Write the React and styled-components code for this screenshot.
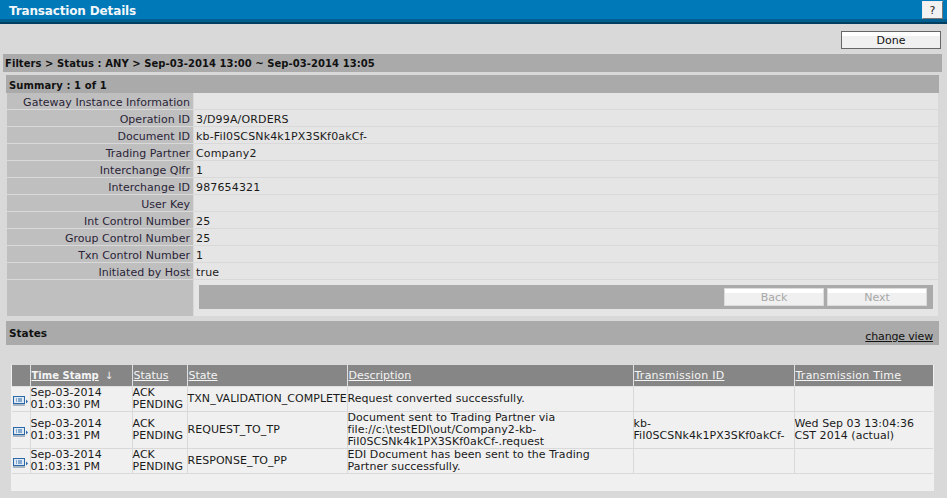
import React from "react";
import styled, { createGlobalStyle } from "styled-components";

const Global = createGlobalStyle`
  html, body { margin: 0; padding: 0; background: #d9d9d9; }
  body { font-family: "DejaVu Sans", Verdana, sans-serif; font-size: 11px; line-height: 12px; color: #1a1a1a; }
  * { box-sizing: border-box; }
`;

const Page = styled.div`width: 947px; height: 498px; overflow: hidden; background: #d9d9d9;`;
const TitleBar = styled.header`
  height: 24px; display: flex; align-items: flex-start; justify-content: space-between;
  background: linear-gradient(#0079b9 0, #0079b9 19px, #005f8f 19px, #005f8f 22px, #003f5f 22px);
  padding: 1px 4px 0 9px;
`;
const Title = styled.h1`margin: 2px 0 0; font-size: 12px; line-height: 16px; font-weight: 700; color: #f2f7fa; letter-spacing: -0.15px;`;
const HelpButton = styled.button`
  width: 21px; height: 18px; padding: 0; background: #f2f2f2; border: 1px solid #777;
  border-top-color: #eee; border-left-color: #eee; font: 11px "DejaVu Sans", sans-serif; color: #222;
`;
const DoneRow = styled.div`display: flex; justify-content: flex-end; padding: 7px 6px 0 0; height: 30px;`;
const Button = styled.button`
  width: 100px; height: 18px; padding: ${p => (p.disabled ? "2px" : "1px")} 0 0; font: 11px/14px "DejaVu Sans", sans-serif;
  background: linear-gradient(#fff 0, #fff 4px, #f0f0f0 4px);
  border: 1px solid ${p => (p.disabled ? "#dcdcdc" : "#666")};
  color: ${p => (p.disabled ? "#a8a8a8" : "#111")};
`;
const FilterBar = styled.div`
  margin-left: 3px; width: 939px; height: 18px; background: #aaa;
  padding: 4px 0 0 2px; font-size: 10px; font-weight: 700; color: #111; letter-spacing: 0.06px;
`;
const Panel = styled.section`margin: 3px 0 0 6px; width: 933px;`;
const SectionHead = styled.div`height: 18px; background: #aaa; padding: 5px 0 0 3px; font-size: 10px; font-weight: 700; color: #111; letter-spacing: 0.08px;`;
const Summary = styled.div`margin-left: 1px; width: 931px; background: #e5e5e5;`;
const Row = styled.div`
  display: grid; grid-template-columns: 187px 1fr; height: 17px;
  border-bottom: 1px solid #d9d9d9;
`;
const Label = styled.div`
  background: #bfbfbf; text-align: right; padding: 4px 3px 0 0; color: #2a2438;
  border-right: 1px solid #d9d9d9; white-space: nowrap; letter-spacing: 0.03px;
`;
const Value = styled.div`padding: 4px 0 0 2px; color: #1a1a1a; white-space: nowrap; letter-spacing: 0.15px;`;
const PagerRow = styled.div`display: grid; grid-template-columns: 187px 1fr; height: 36px;`;
const PagerLabel = styled.div`background: #bfbfbf; border-right: 1px solid #d9d9d9;`;
const PagerCell = styled.div`padding: 5px 5px 6px 5px;`;
const PagerBar = styled.div`
  height: 24px; background: #aaa; display: flex; justify-content: flex-end; gap: 3px;
  padding: 3px 6px 0 0;
`;
const StatesBar = styled.div`
  margin: 5px 0 0 6px; width: 933px; height: 24px; background: #aaa; display: flex;
  justify-content: space-between; padding: 6px 6px 0 3px; font-size: 10.5px; font-weight: 700; color: #111;
`;
const ChangeView = styled.a`font-size: 11px; font-weight: 400; text-decoration: underline; color: #111; margin-top: 4px; letter-spacing: -0.15px;`;
const TableWrap = styled.div`margin: 20px 0 0 11px; width: 923px; background: #f0f0f0; height: 126px;`;
const Table = styled.table`
  margin-left: 1px; width: 921px; table-layout: fixed; border-collapse: collapse; border-spacing: 0;
`;
const Th = styled.th`
  height: 21px; background: #868686; color: #f4f4f4; font-weight: ${p => (p.$sorted ? 700 : 400)};
  font-size: ${p => (p.$sorted ? "10px" : "11px")};
  letter-spacing: ${p => (p.$wide ? "0.25px" : "0")};
  text-align: left; padding: 1px 0 0 1px; border-right: 1px solid #e0e0e0; border-bottom: 1px solid #e0e0e0;
  text-decoration: underline; white-space: nowrap;
  &:last-child { border-right: 0; }
`;
const SortArrow = styled.span`display: inline-block; margin-left: 6px; text-decoration: none; font-weight: 400;`;
const Td = styled.td`
  background: #f0f0f0; vertical-align: middle; padding: 0 ${p => (p.$wrapGap ? "4px" : "0")} 0 0; color: #1a1a1a;
  border-right: 1px solid #d9d9d9; border-bottom: 1px solid #d9d9d9; overflow: visible; letter-spacing: 0.05px;
  &:last-child { border-right: 0; }
`;
const IconTd = styled(Td)`padding: 5px 0 0 1px;`;
const Nowrap = styled.span`white-space: nowrap;`;

const DetailIcon = () => (
  <svg width="16" height="10" viewBox="0 0 16 10" style={{ display: "block" }}>
    <rect x="0.5" y="0.5" width="11" height="7" fill="#dfeaf5" stroke="#2a68a8" />
    <rect x="0" y="8" width="12" height="2" fill="#a9b4c2" />
    <path d="M3 3h1M3 5h1M5 3h4M5 5h4" stroke="#2a68a8" />
    <path d="M13 3.5l2 2-2 2z" fill="#2a68a8" />
  </svg>
);

const summary = [
  ["Gateway Instance Information", ""],
  ["Operation ID", "3/D99A/ORDERS"],
  ["Document ID", "kb-FiI0SCSNk4k1PX3SKf0akCf-"],
  ["Trading Partner", "Company2"],
  ["Interchange Qlfr", "1"],
  ["Interchange ID", "987654321"],
  ["User Key", ""],
  ["Int Control Number", "25"],
  ["Group Control Number", "25"],
  ["Txn Control Number", "1"],
  ["Initiated by Host", "true"],
];

const states = [
  { h: 25, t: "01:03:30 PM", state: "TXN_VALIDATION_COMPLETE", desc: "Request converted successfully." },
  {
    h: 37, t: "01:03:31 PM", state: "REQUEST_TO_TP",
    desc: "Document sent to Trading Partner via file://c:\\testEDI\\out/Company2-kb-FiI0SCSNk4k1PX3SKf0akCf-.request",
    id: "kb-FiI0SCSNk4k1PX3SKf0akCf-", time: "Wed Sep 03 13:04:36 CST 2014 (actual)",
  },
  { h: 25, t: "01:03:31 PM", state: "RESPONSE_TO_PP", desc: "EDI Document has been sent to the Trading Partner successfully." },
];

export default function App() {
  return (
    <Page>
      <Global />
      <TitleBar>
        <Title>Transaction Details</Title>
        <HelpButton>?</HelpButton>
      </TitleBar>
      <DoneRow><Button>Done</Button></DoneRow>
      <FilterBar>Filters &gt; Status : ANY &gt; Sep-03-2014 13:00 ~ Sep-03-2014 13:05</FilterBar>
      <Panel>
        <SectionHead>Summary : 1 of 1</SectionHead>
        <Summary>
          {summary.map(([l, v]) => (
            <Row key={l}><Label>{l}</Label><Value>{v}</Value></Row>
          ))}
          <PagerRow>
            <PagerLabel />
            <PagerCell>
              <PagerBar><Button disabled>Back</Button><Button disabled>Next</Button></PagerBar>
            </PagerCell>
          </PagerRow>
        </Summary>
      </Panel>
      <StatesBar>States<ChangeView>change view</ChangeView></StatesBar>
      <TableWrap>
        <Table>
          <colgroup>
            <col style={{ width: 18 }} /><col style={{ width: 102 }} /><col style={{ width: 55 }} />
            <col style={{ width: 160 }} /><col style={{ width: 286 }} /><col style={{ width: 161 }} /><col />
          </colgroup>
          <thead>
            <tr>
              <Th />
              <Th $sorted>Time Stamp<SortArrow> ↓</SortArrow></Th>
              <Th>Status</Th><Th>State</Th><Th>Description</Th><Th $wide>Transmission ID</Th><Th $wide>Transmission Time</Th>
            </tr>
          </thead>
          <tbody>
            {states.map(s => (
              <tr key={s.state} style={{ height: s.h }}>
                <IconTd><DetailIcon /></IconTd>
                <Td>Sep-03-2014<br />{s.t}</Td>
                <Td>ACK<br />PENDING</Td>
                <Td><Nowrap>{s.state}</Nowrap></Td>
                <Td $wrapGap>{s.desc}</Td>
                <Td>{s.id}</Td>
                <Td>{s.time}</Td>
              </tr>
            ))}
          </tbody>
        </Table>
      </TableWrap>
    </Page>
  );
}
